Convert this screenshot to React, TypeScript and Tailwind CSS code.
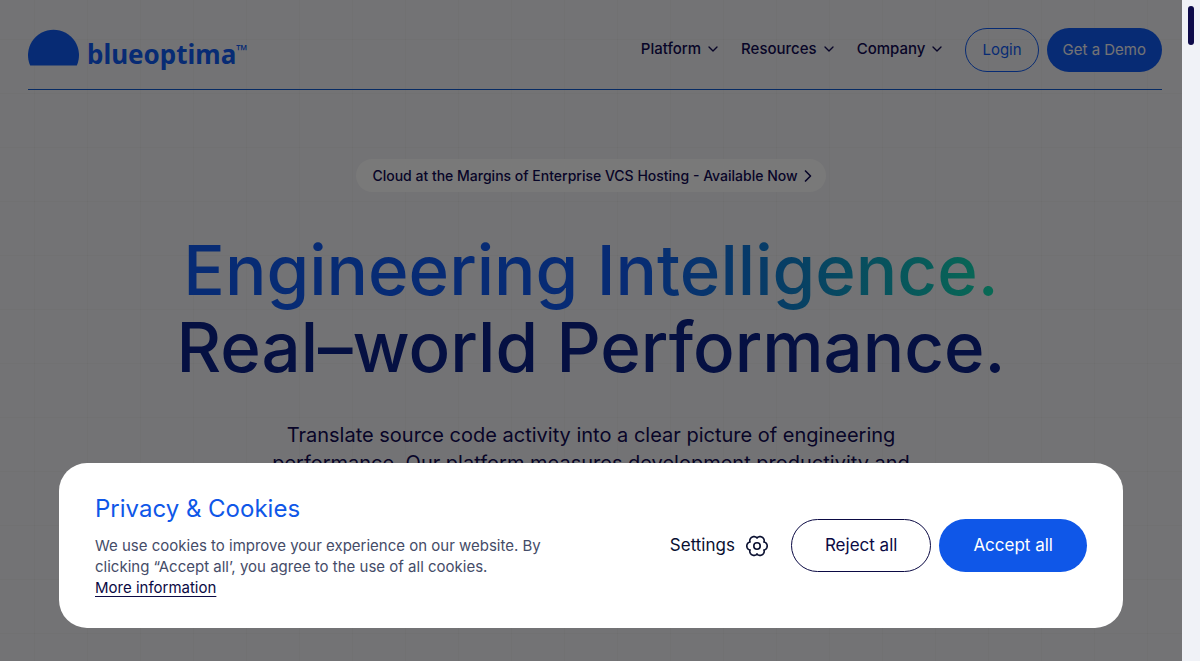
import { ChevronDown, ChevronRight } from 'lucide-react';

const navItems = ['Platform', 'Resources', 'Company'];

// six rounded lobes with a narrow notch between each pair
const gearPath = Array.from({ length: 120 }, (_, i) => {
  const a = (i / 120) * Math.PI * 2;
  const r = 7.9 + 2.3 * Math.pow(Math.abs(Math.cos(3 * a)), 0.7);
  return `${i ? 'L' : 'M'}${(12 + r * Math.cos(a)).toFixed(2)} ${(12 + r * Math.sin(a)).toFixed(2)}`;
}).join('') + 'Z';

function GearIcon() {
  return (
    <svg className="h-6 w-6" viewBox="0 0 24 24" fill="none" stroke="currentColor" strokeWidth="1.6" strokeLinejoin="round" aria-hidden="true">
      <path d={gearPath} />
      <circle cx="12" cy="12" r="3.2" />
    </svg>
  );
}

function Logo() {
  return (
    <a href="#" className="flex text-[#0f57e8]" aria-label="blueoptima">
      <svg className="mt-px h-[37px] w-[51px]" viewBox="0 0 51 37" fill="currentColor" aria-hidden="true">
        <path d="M2.2 36.5A25.5 25.5 0 1 1 48.8 36.5Z" />
      </svg>
      <span className="ml-2 mt-2 font-['Noto_Sans'] text-[26px] leading-9 font-bold">blueoptima</span>
      <span className="mt-3 font-['Noto_Sans'] text-[15px] leading-5 font-bold">™</span>
    </a>
  );
}

function Header() {
  return (
    <header className="ml-7 mr-5 flex h-[90px] items-start justify-between border-b border-[#0f57c8] pt-7">
      <Logo />
      <div className="flex items-center">
        <nav className="mr-5 flex gap-5 pb-0.5">
          {navItems.map((item) => (
            <button key={item} className="flex items-center gap-1 text-[15px] leading-5 font-medium">
              {item}
              <ChevronDown className="h-4 w-4" strokeWidth={2} />
            </button>
          ))}
        </nav>
        <div className="flex gap-2 text-[15px]">
          <a href="#" className="flex h-11 items-center rounded-full border border-[#0f57e8] px-4 text-[#0f57e8]">Login</a>
          <a href="#" className="flex h-11 items-center rounded-full bg-[#0f57e8] px-4 text-[#e6e6ea]">Get a Demo</a>
        </div>
      </div>
    </header>
  );
}

function Hero() {
  return (
    <section className="flex flex-col items-center px-6 pt-[69px] text-center">
      <a href="#" className="flex h-[33px] items-center rounded-full bg-[#f3f3f3] pl-4 pr-2 text-[14px] font-medium">
        Cloud at the Margins of Enterprise VCS Hosting - Available Now
        <ChevronRight className="h-5 w-5" strokeWidth={2} />
      </a>
      <h1 className="mt-10 text-[69px] leading-[77px] font-medium text-[#0a2084]">
        <span className="bg-[linear-gradient(90deg,#0f57e8_55%,#0f7fc8_75%,#10d6a8_100%)] bg-clip-text text-transparent">Engineering Intelligence.</span>
        <br />
        Real–world Performance.
      </h1>
      <p className="mt-[35px] max-w-[680px] text-[20px] leading-7">
        Translate source code activity into a clear picture of engineering performance. Our platform measures development productivity and
      </p>
    </section>
  );
}

function CookieDialog() {
  return (
    <div role="dialog" aria-labelledby="cookie-title" className="absolute inset-x-[59px] bottom-[33px] flex items-center justify-between rounded-[28px] bg-white px-9 py-7 text-[#0b0a44]">
      <div className="max-w-[470px]">
        <h2 id="cookie-title" className="text-[24px] leading-9 text-[#0f57e8]">Privacy &amp; Cookies</h2>
        <p className="mt-2 mb-0.5 text-[15px] leading-[21px] text-[#454c68]">
          We use cookies to improve your experience on our website. By clicking “Accept all’, you agree to the use of all cookies.
          <br />
          <a href="#" className="text-[#0b0a44] underline underline-offset-3">More information</a>
        </p>
      </div>
      <div className="flex items-center gap-2 text-[17px]">
        <button className="mr-3.5 flex items-center gap-2.5 text-[#0a1030]">
          Settings
          <GearIcon />
        </button>
        <button className="h-[53px] rounded-full border border-[#0b0a44] px-[33px]">Reject all</button>
        <button className="h-[53px] rounded-full bg-[#0f57e8] px-[34px] text-white">Accept all</button>
      </div>
    </div>
  );
}

export default function App() {
  return (
    <div className="flex h-screen overflow-hidden bg-[#f0f2f7] font-['Inter',sans-serif] text-[#100a50]">
      <main className="relative flex-1 overflow-hidden bg-[#e7e7ea] bg-[linear-gradient(#00000006_1px,transparent_1px),linear-gradient(90deg,#00000006_1px,transparent_1px)] bg-[size:53px_54px] bg-[position:34px_39px]">
        <Header />
        <Hero />
        <div className="absolute inset-0 bg-black/50" />
        <CookieDialog />
      </main>
      <div className="flex w-[18px] justify-center pt-[6px]">
        <div className="h-[39px] w-[6px] rounded-full bg-[#0d0a4a]" />
      </div>
    </div>
  );
}
